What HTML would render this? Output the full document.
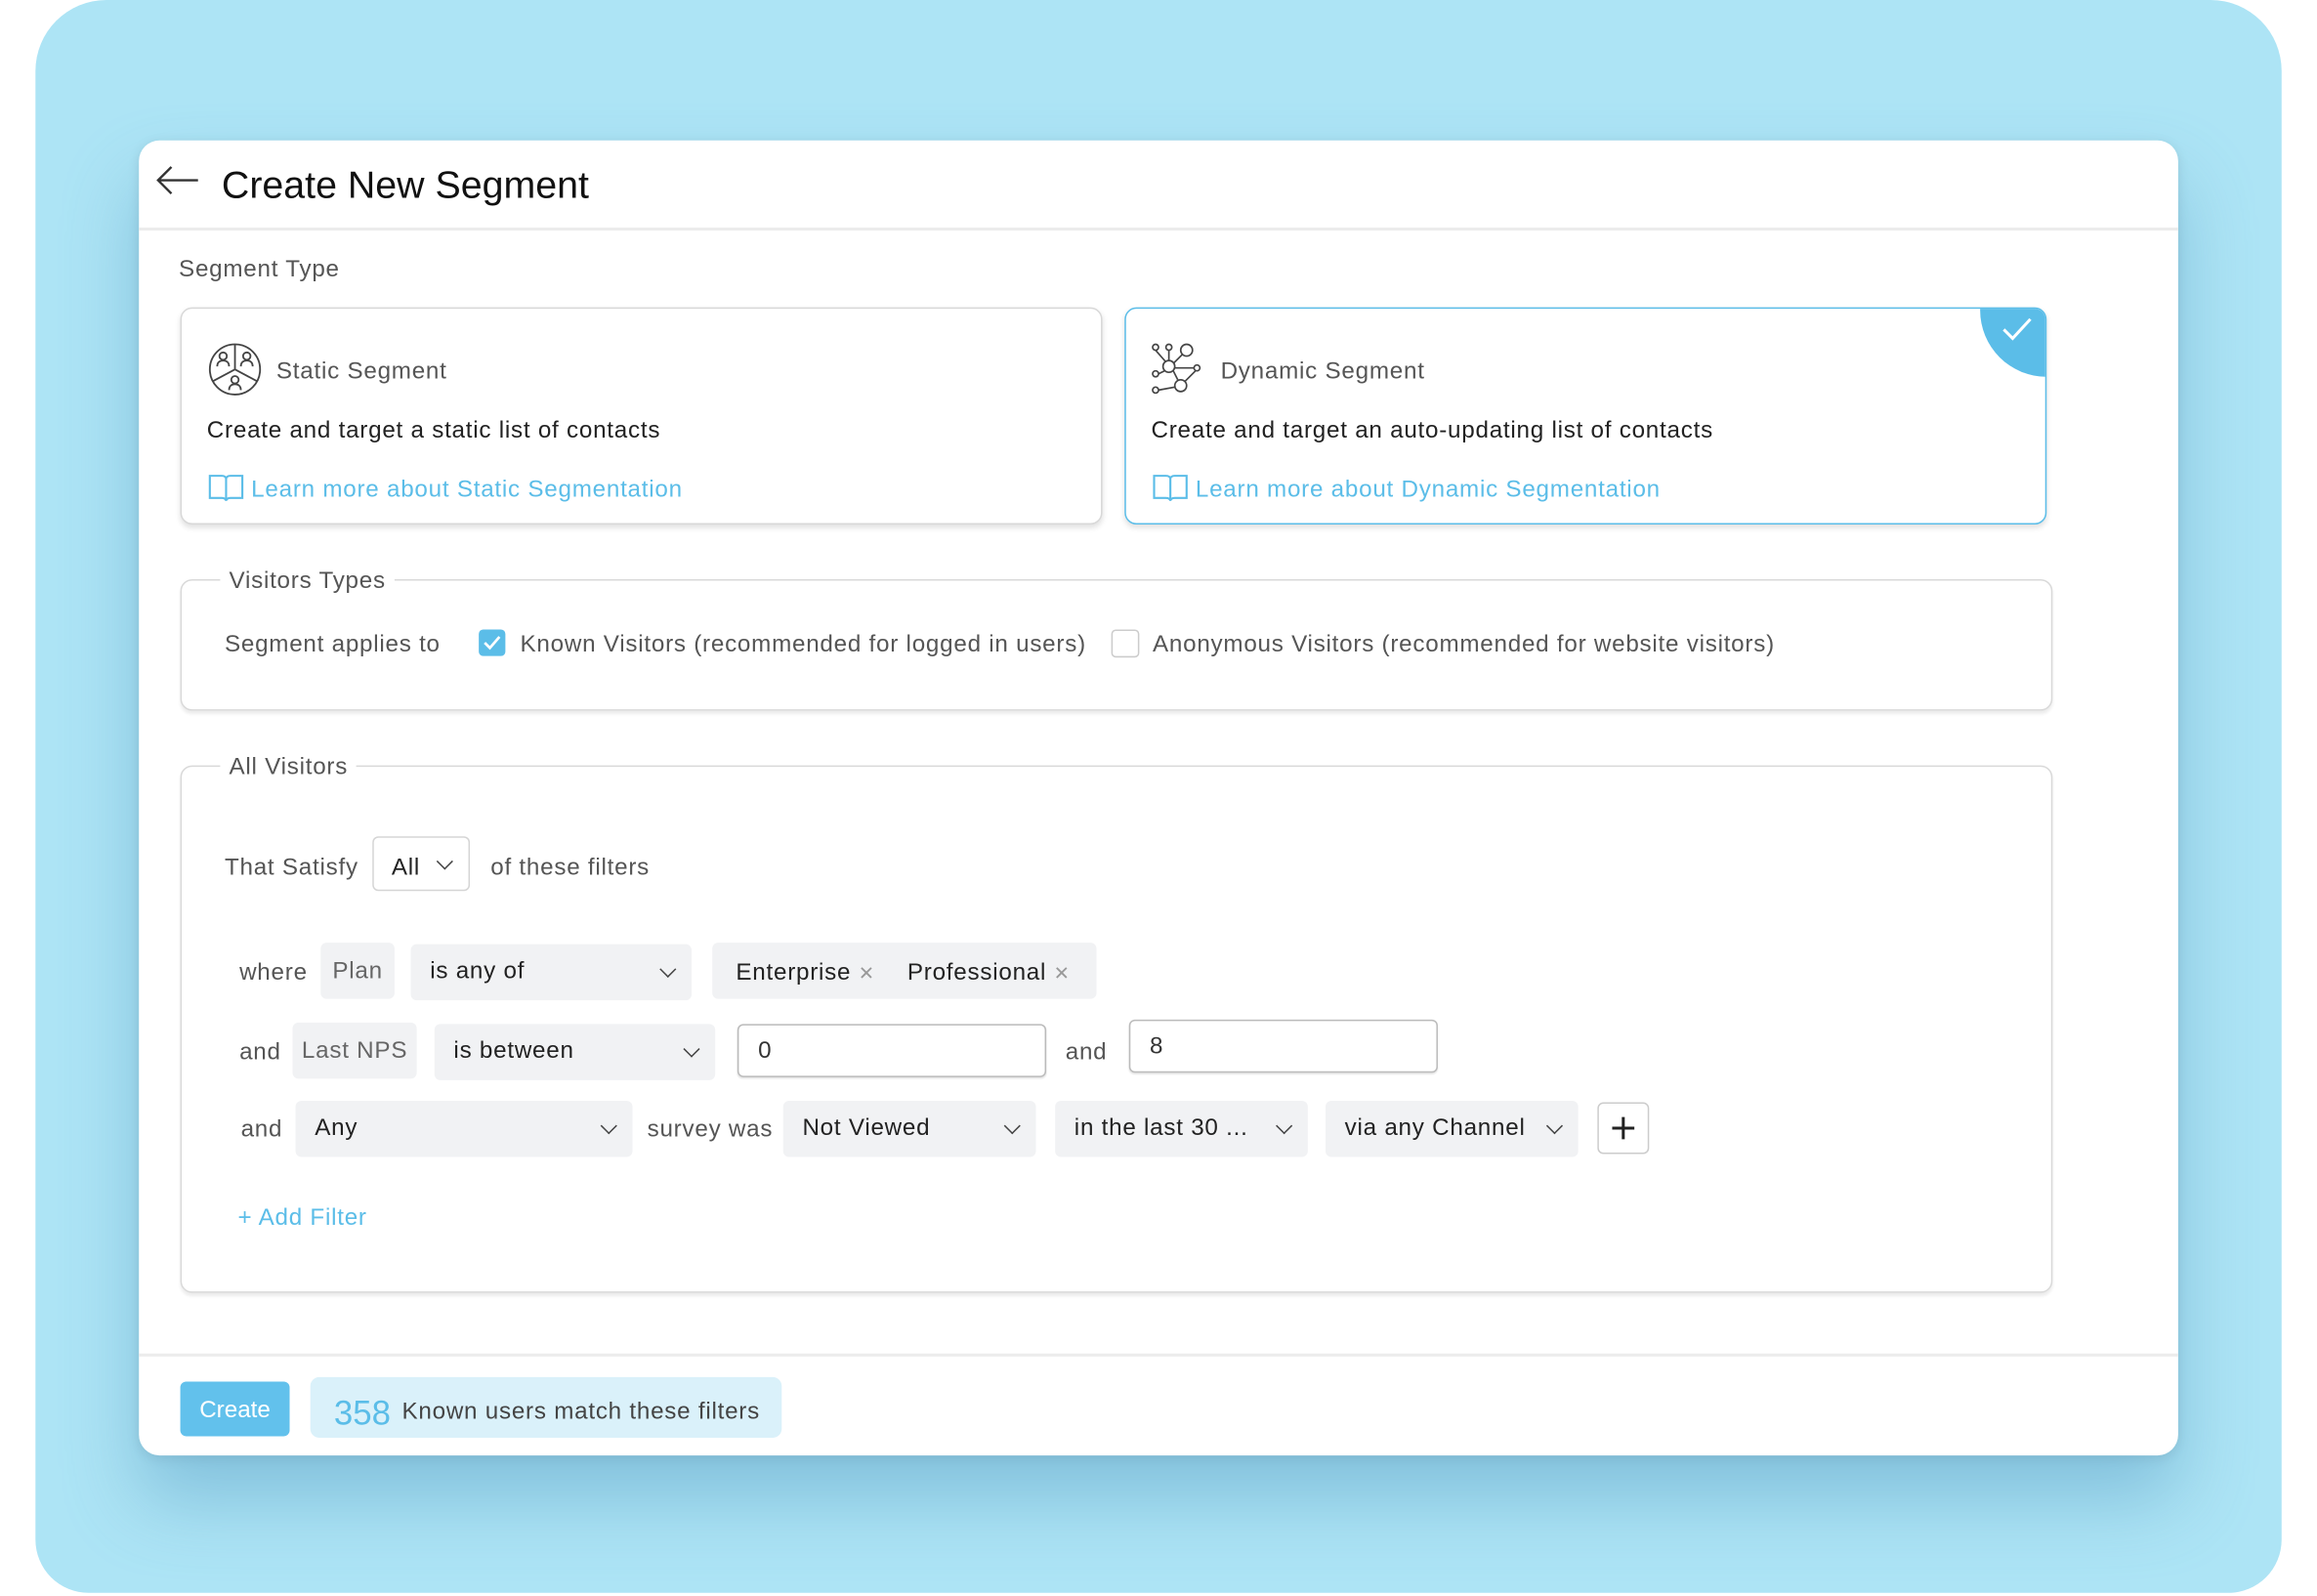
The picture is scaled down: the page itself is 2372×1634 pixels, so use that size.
<!DOCTYPE html>
<html><head><meta charset="utf-8"><style>
html,body{margin:0;padding:0;background:#fff;}
body{width:2372px;height:1634px;overflow:hidden;position:relative;font-family:"Liberation Sans",sans-serif;}
#w{position:absolute;left:0;top:0;width:1568px;height:1080px;transform:scale(1.5128);transform-origin:0 0;}
.a{position:absolute;}
.bg{left:24px;top:0;width:1520px;height:1078px;background:#ade4f5;border-radius:48px 48px 36px 36px;}
.card{left:94px;top:95px;width:1380px;height:890px;background:#fff;border-radius:14px;box-shadow:0 30px 50px rgba(80,150,190,.45),0 2px 8px rgba(0,0,0,.1);overflow:hidden;}
.t{position:absolute;white-space:nowrap;font-size:16px;color:#555;line-height:20px;letter-spacing:0.5px;margin-top:2px;}
.seg{position:absolute;top:208px;width:622px;height:145px;border:1px solid #d8d8d8;border-radius:8px;background:#fff;box-shadow:0 2px 4px rgba(0,0,0,.12);overflow:hidden;}
.fs{position:absolute;left:122px;width:1265px;border:1px solid #d9d9d9;border-radius:8px;box-shadow:0 2px 2px rgba(0,0,0,.08);}
.lg{position:absolute;top:-9px;background:#fff;padding:0 6px;font-size:16px;color:#555;line-height:20px;letter-spacing:0.5px;}
.sel{position:absolute;background:#f1f2f4;border-radius:4px;height:38px;font-size:16px;color:#222;line-height:38px;padding-left:13px;box-sizing:border-box;letter-spacing:0.5px;}
.chev{position:absolute;right:12px;top:13px;width:7px;height:7px;border-right:1.3px solid #444;border-bottom:1.3px solid #444;transform:rotate(45deg);}
.chip{position:absolute;background:#f1f2f4;border-radius:4px;height:38px;font-size:16px;color:#666;line-height:40px;text-align:center;letter-spacing:0.5px;}
.inp{position:absolute;border:1px solid #bbb;border-radius:4px;height:36px;background:#fff;font-size:16px;color:#333;line-height:36px;padding-left:13px;box-sizing:border-box;box-shadow:0 1px 1px rgba(0,0,0,.1);}
.link{color:#5bbde8;}
</style></head><body><div id="w">
<div class="a bg"></div>
<div class="a card">
  <div class="a" style="left:0;top:59px;width:1380px;height:2px;background:#ececec"></div>
  <div class="a" style="left:0;top:821px;width:1380px;height:2px;background:#ececec"></div>
</div>
<svg class="a" style="left:104px;top:110px" width="32" height="24" viewBox="0 0 32 24"><path d="M30 12H4M12 3L3 12l9 9" fill="none" stroke="#333" stroke-width="1.6"/></svg>
<div class="t" style="left:150px;top:107px;font-size:26px;line-height:32px;color:#111;letter-spacing:0">Create New Segment</div>
<div class="t" style="left:121px;top:171px">Segment Type</div>

<div class="seg" style="left:122px"></div>
<svg class="a" style="left:140px;top:231px" width="38" height="38" viewBox="0 0 38 38" fill="none" stroke="#444" stroke-width="1.2"><circle cx="19" cy="19" r="17"/><path d="M19 19V2M19 19L4 27M19 19l15 8"/><circle cx="11" cy="10" r="2.5"/><path d="M7 17c0-3 2-4 4-4s4 1 4 4"/><circle cx="27" cy="10" r="2.5"/><path d="M23 17c0-3 2-4 4-4s4 1 4 4"/><circle cx="19" cy="26" r="2.5"/><path d="M15 33c0-3 2-4 4-4s4 1 4 4"/></svg>
<div class="t" style="left:187px;top:240px">Static Segment</div>
<div class="t" style="left:140px;top:280px;color:#222">Create and target a static list of contacts</div>
<svg class="a" style="left:141px;top:320px" width="24" height="22" viewBox="0 0 24 22" fill="none" stroke="#5bbde8" stroke-width="1.4"><path d="M1 2h8c2 0 3 1 3 2v15c0-1-1-2-3-2H1zM23 2h-8c-2 0-3 1-3 2v15c0-1 1-2 3-2h8z"/></svg>
<div class="t link" style="left:170px;top:320px">Learn more about Static Segmentation</div>

<div class="seg" style="left:761px;border-color:#5bbde8;"><div class="a" style="left:578px;top:-44px;width:90px;height:90px;border-radius:50%;background:#5bbde8"></div></div>
<svg class="a" style="left:1354px;top:214px" width="22" height="18" viewBox="0 0 22 18"><path d="M2 9l6 6L20 2" fill="none" stroke="#fff" stroke-width="2"/></svg>
<svg class="a" style="left:779px;top:231px" width="36" height="38" viewBox="0 0 36 38" fill="none" stroke="#444" stroke-width="1.1"><circle cx="3" cy="4" r="2"/><circle cx="12" cy="4" r="2"/><circle cx="24" cy="6" r="4"/><circle cx="12" cy="17" r="4"/><circle cx="31" cy="18" r="2"/><circle cx="3" cy="22" r="2"/><circle cx="20" cy="30" r="4"/><circle cx="3" cy="33" r="2"/><path d="M3 6l7 8M12 6v7M21 9l-6 6M16 18l13 0M5 22l4-2M15 20l3 6M23 27l7-7M5 33l11-2"/></svg>
<div class="t" style="left:826px;top:240px">Dynamic Segment</div>
<div class="t" style="left:779px;top:280px;color:#222">Create and target an auto-updating list of contacts</div>
<svg class="a" style="left:780px;top:320px" width="24" height="22" viewBox="0 0 24 22" fill="none" stroke="#5bbde8" stroke-width="1.4"><path d="M1 2h8c2 0 3 1 3 2v15c0-1-1-2-3-2H1zM23 2h-8c-2 0-3 1-3 2v15c0-1 1-2 3-2h8z"/></svg>
<div class="t link" style="left:809px;top:320px">Learn more about Dynamic Segmentation</div>

<div class="fs" style="top:392px;height:87px"><div class="lg" style="left:26px">Visitors Types</div></div>
<div class="t" style="left:152px;top:425px">Segment applies to</div>
<div class="a" style="left:324px;top:426px;width:18px;height:18px;background:#5bbde8;border-radius:3px"></div>
<svg class="a" style="left:326px;top:428px" width="14" height="14" viewBox="0 0 14 14"><path d="M2 7l3.5 3.5L12 3" fill="none" stroke="#fff" stroke-width="1.8"/></svg>
<div class="t" style="left:352px;top:425px">Known Visitors (recommended for logged in users)</div>
<div class="a" style="left:752px;top:426px;width:17px;height:17px;border:1px solid #ccc;border-radius:3px;background:#fff"></div>
<div class="t" style="left:780px;top:425px">Anonymous Visitors (recommended for website visitors)</div>

<div class="fs" style="top:518px;height:355px"><div class="lg" style="left:26px">All Visitors</div></div>
<div class="t" style="left:152px;top:576px">That Satisfy</div>
<div class="a" style="left:252px;top:566px;width:66px;height:37px;border:1px solid #d5d5d5;border-radius:4px;box-sizing:border-box"></div>
<div class="t" style="left:265px;top:576px;color:#222">All</div>
<div class="chev" style="left:297px;top:579px;right:auto"></div>
<div class="t" style="left:332px;top:576px">of these filters</div>

<div class="t" style="left:162px;top:647px">where</div>
<div class="chip" style="left:217px;top:638px;width:50px">Plan</div>
<div class="sel" style="left:278px;top:639px;width:190px">is any of<div class="chev"></div></div>
<div class="a" style="left:482px;top:638px;width:260px;height:38px;background:#f1f2f4;border-radius:4px"></div>
<div class="t" style="left:498px;top:647px;color:#222">Enterprise <span style="color:#999;font-size:13px">✕</span></div>
<div class="t" style="left:614px;top:647px;color:#222">Professional <span style="color:#999;font-size:13px">✕</span></div>

<div class="t" style="left:162px;top:701px">and</div>
<div class="chip" style="left:198px;top:692px;width:84px">Last NPS</div>
<div class="sel" style="left:294px;top:693px;width:190px">is between<div class="chev"></div></div>
<div class="inp" style="left:499px;top:693px;width:209px">0</div>
<div class="t" style="left:721px;top:701px">and</div>
<div class="inp" style="left:764px;top:690px;width:209px">8</div>

<div class="t" style="left:163px;top:753px">and</div>
<div class="sel" style="left:200px;top:745px;width:228px">Any<div class="chev"></div></div>
<div class="t" style="left:438px;top:753px">survey was</div>
<div class="sel" style="left:530px;top:745px;width:171px">Not Viewed<div class="chev"></div></div>
<div class="sel" style="left:714px;top:745px;width:171px">in the last 30 ...<div class="chev"></div></div>
<div class="sel" style="left:897px;top:745px;width:171px">via any Channel<div class="chev"></div></div>
<div class="a" style="left:1081px;top:746px;width:35px;height:35px;border:1px solid #ccc;border-radius:4px;box-sizing:border-box;background:#fff"></div>
<svg class="a" style="left:1090px;top:755px" width="17" height="17" viewBox="0 0 17 17"><path d="M8.5 1v15M1 8.5h15" stroke="#222" stroke-width="2"/></svg>
<div class="t link" style="left:161px;top:813px">+ Add Filter</div>

<div class="a" style="left:122px;top:935px;width:74px;height:37px;background:#62c1ec;border-radius:4px;color:#fff;font-size:16px;line-height:39px;text-align:center">Create</div>
<div class="a" style="left:210px;top:932px;width:319px;height:41px;background:#daf1fa;border-radius:6px"></div>
<div class="t" style="left:226px;top:941px;font-size:23px;line-height:26px;color:#5bbde8;letter-spacing:0">358</div>
<div class="t" style="left:272px;top:944px;color:#444">Known users match these filters</div>
</div></body></html>
